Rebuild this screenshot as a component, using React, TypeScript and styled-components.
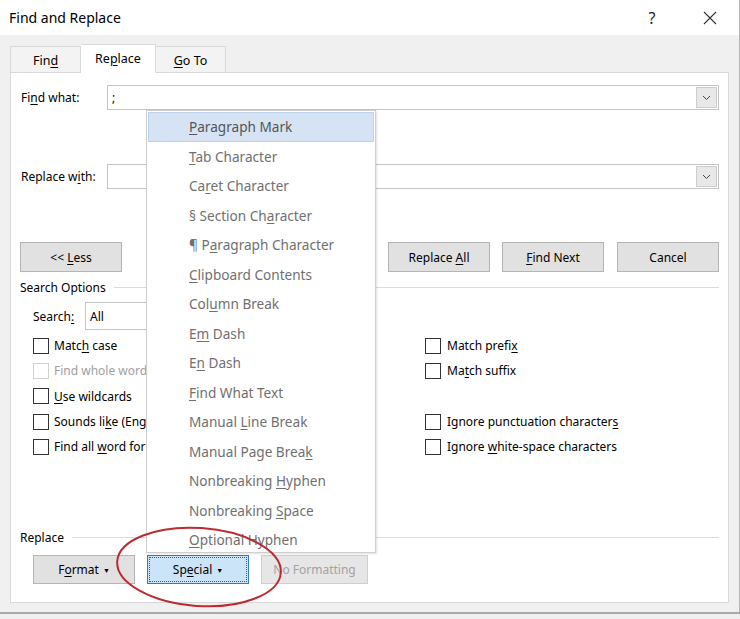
import React from 'react';
import styled, { createGlobalStyle } from 'styled-components';

const GlobalStyle = createGlobalStyle`
  html, body {
    margin: 0;
    padding: 0;
    background: #f0f0f0;
  }
  body {
    font-family: "Noto Sans", "Open Sans", sans-serif;
    color: #000;
  }
  u {
    text-underline-offset: 2px;
    text-decoration-thickness: 1px;
  }
`;

const Window = styled.div`
  position: relative;
  width: 739px;
  height: 612px;
  display: flex;
  flex-direction: column;
  background: #f0f0f0;
  border-right: 1px solid #b4b4b4;
  border-bottom: 2px solid #a9a9a9;
  overflow: hidden;
`;

const TitleBar = styled.div`
  height: 35px;
  flex: none;
  display: flex;
  align-items: center;
  background: #ffffff;
  padding-left: 9px;
`;

const Title = styled.div`
  font-size: 14px;
  flex: 1;
`;

const Help = styled.div`
  width: 30px;
  text-align: center;
  font-size: 16px;
  color: #222;
  margin-right: 28px;
`;

const CloseBox = styled.div`
  width: 30px;
  display: flex;
  justify-content: center;
  margin-right: 14px;
`;

const Body = styled.div`
  flex: 1;
  display: flex;
  flex-direction: column;
  padding: 9px 10px 9px 10px;
`;

const TabRow = styled.div`
  display: flex;
  align-items: flex-end;
  height: 29px;
  margin-bottom: -1px;
  position: relative;
  z-index: 1;
`;

const Tab = styled.div<{ $active?: boolean; $w: number }>`
  width: ${(p) => p.$w}px;
  height: ${(p) => (p.$active ? 29 : 27)}px;
  box-sizing: border-box;
  display: flex;
  align-items: center;
  justify-content: center;
  font-size: 12.5px;
  background: ${(p) => (p.$active ? '#ffffff' : '#f3f3f3')};
  border: 1px solid #d9d9d9;
  border-bottom: 1px solid ${(p) => (p.$active ? '#ffffff' : '#d9d9d9')};
  padding-top: ${(p) => (p.$active ? 0 : 1)}px;
  & + & {
    border-left: none;
  }
`;

const Panel = styled.div`
  position: relative;
  flex: 1;
  display: flex;
  flex-direction: column;
  background: #ffffff;
  border: 1px solid #d9d9d9;
  padding: 12px 9px 18px 9px;
`;

const FieldRow = styled.div<{ $top: number }>`
  display: flex;
  align-items: center;
  height: 25px;
  margin-top: ${(p) => p.$top}px;
`;

const Label = styled.div<{ $w: number; $indent?: number }>`
  width: ${(p) => p.$w}px;
  padding-left: ${(p) => p.$indent ?? 1}px;
  box-sizing: border-box;
  font-size: 12px;
  flex: none;
`;

const Combo = styled.div<{ $w?: number; $h?: number }>`
  ${(p) => (p.$w ? `width: ${p.$w}px; flex: none;` : 'flex: 1;')}
  height: ${(p) => p.$h ?? 25}px;
  box-sizing: border-box;
  border: 1px solid #c4c4c4;
  display: flex;
  align-items: center;
  background: #fff;
`;

const ComboText = styled.div`
  flex: 1;
  font-size: 12px;
  padding-left: 4px;
`;

const ArrowBtn = styled.div`
  width: 21px;
  height: calc(100% - 2px);
  margin-right: 1px;
  box-sizing: border-box;
  background: #e8e8e8;
  border: 1px solid #cdcdcd;
  display: flex;
  align-items: center;
  justify-content: center;
`;

const ButtonRow = styled.div`
  display: flex;
  margin-top: 53px;
  height: 30px;
`;

const Button = styled.div<{ $w?: number; $gap?: number; $variant?: 'focus' | 'disabled' }>`
  width: ${(p) => p.$w ?? 102}px;
  height: 100%;
  margin-left: ${(p) => p.$gap ?? 0}px;
  box-sizing: border-box;
  display: flex;
  align-items: center;
  justify-content: center;
  font-size: 12px;
  white-space: pre;
  background: ${(p) =>
    p.$variant === 'focus' ? '#cce4f7' : p.$variant === 'disabled' ? '#e6e6e6' : '#e1e1e1'};
  border: 1px solid
    ${(p) =>
      p.$variant === 'focus' ? '#2c7bd0' : p.$variant === 'disabled' ? '#cfcfcf' : '#b5b5b5'};
  color: ${(p) => (p.$variant === 'disabled' ? '#a2a2a2' : '#000')};
  outline: ${(p) => (p.$variant === 'focus' ? '1px dotted #555' : 'none')};
  outline-offset: -3px;
`;

const Spacer = styled.div`
  flex: 1;
`;

const GroupHeader = styled.div<{ $top: number }>`
  display: flex;
  align-items: center;
  height: 16px;
  margin-top: ${(p) => p.$top}px;
  font-size: 12px;
  &::after {
    content: '';
    flex: 1;
    height: 1px;
    background: #dcdcdc;
    margin-left: 8px;
  }
`;

const SearchRow = styled.div`
  display: flex;
  align-items: center;
  height: 28px;
  margin-top: 7px;
`;

const OptionGrid = styled.div`
  display: grid;
  grid-template-columns: 392px 1fr;
  grid-template-rows: repeat(5, 25.3px);
  grid-auto-flow: column;
  margin-top: 3px;
  padding-left: 13px;
`;

const Option = styled.div<{ $disabled?: boolean; $gap?: number }>`
  display: flex;
  align-items: center;
  font-size: 12px;
  white-space: nowrap;
  color: ${(p) => (p.$disabled ? '#a0a0a0' : '#000')};
  gap: ${(p) => p.$gap ?? 5}px;
`;

const Box = styled.span<{ $disabled?: boolean }>`
  width: 16px;
  height: 16px;
  box-sizing: border-box;
  border: 1px solid ${(p) => (p.$disabled ? '#d2d2d2' : '#333')};
  background: #fff;
  flex: none;
`;

const BottomSection = styled.div`
  margin-top: auto;
  display: flex;
  flex-direction: column;
`;

const BottomButtons = styled.div`
  display: flex;
  height: 29px;
  margin-top: 10px;
  padding-left: 13px;
`;

const Caret = styled.span`
  font-size: 7px;
  margin-left: 4px;
  position: relative;
  top: -1px;
`;

const Menu = styled.div`
  position: absolute;
  left: 135px;
  top: 37px;
  width: 230px;
  height: 443px;
  box-sizing: border-box;
  background: #ffffff;
  border: 1px solid #cfcfcf;
  box-shadow: 1px 1px 2px rgba(0, 0, 0, 0.12);
  padding: 1px;
  z-index: 5;
`;

const MenuItem = styled.div<{ $hot?: boolean }>`
  height: 29.5px;
  box-sizing: border-box;
  display: flex;
  align-items: center;
  padding-left: 40px;
  font-size: 13.6px;
  color: ${(p) => (p.$hot ? '#555' : '#707070')};
  background: ${(p) => (p.$hot ? '#d6e3f4' : 'transparent')};
  border: 1px solid ${(p) => (p.$hot ? '#bfd2ec' : 'transparent')};
`;

const Annotation = styled.svg`
  position: absolute;
  left: 110px;
  top: 520px;
  pointer-events: none;
  z-index: 10;
`;

const Chevron = () => (
  <svg width="9" height="6" viewBox="0 0 9 6">
    <path d="M1 1 L4.5 4.5 L8 1" fill="none" stroke="#444" strokeWidth="1" />
  </svg>
);

const menuItems: React.ReactNode[] = [
  <><u>P</u>aragraph Mark</>,
  <><u>T</u>ab Character</>,
  <>Ca<u>r</u>et Character</>,
  <>§ Section Ch<u>a</u>racter</>,
  <>¶ P<u>a</u>ragraph Character</>,
  <><u>C</u>lipboard Contents</>,
  <>Col<u>u</u>mn Break</>,
  <>E<u>m</u> Dash</>,
  <>E<u>n</u> Dash</>,
  <><u>F</u>ind What Text</>,
  <>Manual <u>L</u>ine Break</>,
  <>Manual Page Brea<u>k</u></>,
  <>Nonbreaking <u>H</u>yphen</>,
  <>Nonbreaking <u>S</u>pace</>,
  <><u>O</u>ptional Hyphen</>,
];

export default function App() {
  return (
    <>
      <GlobalStyle />
      <Window>
        <TitleBar>
          <Title>Find and Replace</Title>
          <Help>?</Help>
          <CloseBox>
            <svg width="14" height="14" viewBox="0 0 14 14">
              <path d="M1 1 L13 13 M13 1 L1 13" stroke="#333" strokeWidth="1.1" />
            </svg>
          </CloseBox>
        </TitleBar>
        <Body>
          <TabRow>
            <Tab $w={71}>
              <span>
                Fin<u>d</u>
              </span>
            </Tab>
            <Tab $w={75} $active>
              <span>
                Re<u>p</u>lace
              </span>
            </Tab>
            <Tab $w={70}>
              <span>
                <u>G</u>o To
              </span>
            </Tab>
          </TabRow>
          <Panel>
            <FieldRow $top={0}>
              <Label $w={87}>
                Fi<u>n</u>d what:
              </Label>
              <Combo>
                <ComboText>;</ComboText>
                <ArrowBtn>
                  <Chevron />
                </ArrowBtn>
              </Combo>
            </FieldRow>
            <FieldRow $top={54}>
              <Label $w={87}>
                Replace w<u>i</u>th:
              </Label>
              <Combo>
                <ComboText />
                <ArrowBtn>
                  <Chevron />
                </ArrowBtn>
              </Combo>
            </FieldRow>
            <ButtonRow>
              <Button>
                <span>
                  &lt;&lt; <u>L</u>ess
                </span>
              </Button>
              <Spacer />
              <Button>
                <span>
                  Replace <u>A</u>ll
                </span>
              </Button>
              <Button $gap={12}>
                <span>
                  <u>F</u>ind Next
                </span>
              </Button>
              <Button $gap={13}>
                <span>Cancel</span>
              </Button>
            </ButtonRow>
            <GroupHeader $top={7}>Search Options</GroupHeader>
            <SearchRow>
              <Label $w={65} $indent={13}>
                Search<u>:</u>
              </Label>
              <Combo $w={150} $h={28}>
                <ComboText>All</ComboText>
              </Combo>
            </SearchRow>
            <OptionGrid>
              <Option>
                <Box />
                <span>
                  Matc<u>h</u> case
                </span>
              </Option>
              <Option $disabled>
                <Box $disabled />
                <span>Find whole word</span>
              </Option>
              <Option>
                <Box />
                <span>
                  <u>U</u>se wildcards
                </span>
              </Option>
              <Option>
                <Box />
                <span>
                  Sounds li<u>k</u>e (Eng
                </span>
              </Option>
              <Option>
                <Box />
                <span>
                  Find all <u>w</u>ord for
                </span>
              </Option>
              <Option $gap={6}>
                <Box />
                <span>
                  Match prefi<u>x</u>
                </span>
              </Option>
              <Option $gap={6}>
                <Box />
                <span>
                  Ma<u>t</u>ch suffix
                </span>
              </Option>
              <div />
              <Option $gap={6}>
                <Box />
                <span>
                  Ignore punctuation character<u>s</u>
                </span>
              </Option>
              <Option $gap={6}>
                <Box />
                <span>
                  Ignore <u>w</u>hite-space characters
                </span>
              </Option>
            </OptionGrid>
            <BottomSection>
              <GroupHeader $top={0}>Replace</GroupHeader>
              <BottomButtons>
                <Button>
                  <span>
                    F<u>o</u>rmat<Caret>▼</Caret>
                  </span>
                </Button>
                <Button $gap={12} $variant="focus">
                  <span>
                    Sp<u>e</u>cial<Caret>▼</Caret>
                  </span>
                </Button>
                <Button $gap={12} $w={107} $variant="disabled">
                  <span>No Formatting</span>
                </Button>
              </BottomButtons>
            </BottomSection>
            <Menu>
              {menuItems.map((item, i) => (
                <MenuItem key={i} $hot={i === 0}>
                  <span>{item}</span>
                </MenuItem>
              ))}
            </Menu>
          </Panel>
        </Body>
        <Annotation width="180" height="95" viewBox="0 0 180 95">
          <ellipse
            cx="89"
            cy="47"
            rx="82"
            ry="39"
            fill="none"
            stroke="#bd2a2f"
            strokeWidth="2"
            transform="rotate(4 89 47)"
          />
        </Annotation>
      </Window>
    </>
  );
}
